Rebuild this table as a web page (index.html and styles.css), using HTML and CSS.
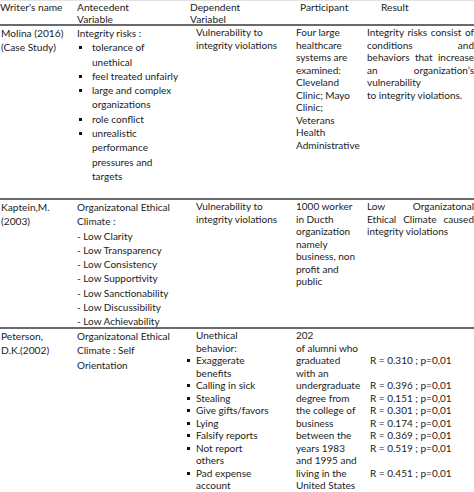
FILE: index.html
```html
<!DOCTYPE html>
<html>
<head>
<meta charset="utf-8">
<link rel="stylesheet" href="styles.css">
</head>
<body>
<div class="table">
  <div class="row head">
    <div class="c c1">Writer's name</div>
    <div class="c c2">Antecedent<br>Variable</div>
    <div class="c c3">Dependent<br>Variabel</div>
    <div class="c c4">Participant</div>
    <div class="c c5">Result</div>
  </div>

  <div class="row r1">
    <div class="c c1">Molina (2016)<br>(Case Study)</div>
    <div class="c c2">
      Integrity risks :
      <ul class="sq">
        <li>tolerance of<br>unethical</li>
        <li>feel treated unfairly</li>
        <li>large and complex<br>organizations</li>
        <li>role conflict</li>
        <li>unrealistic<br>performance<br>pressures and<br>targets</li>
      </ul>
    </div>
    <div class="c c3 s">Vulnerability to<br>integrity violations</div>
    <div class="c c4 s">Four large<br>healthcare<br>systems are<br>examined:<br>Cleveland<br>Clinic; Mayo<br>Clinic;<br>Veterans<br>Health<br>Administrative</div>
    <div class="c c5 s">
      <span class="j">Integrity risks consist of</span>
      <span class="j">conditions and</span>
      <span class="j">behaviors that increase</span>
      <span class="j">an organization’s</span>
      <span class="l">vulnerability</span>
      <span class="l">to integrity violations.</span>
    </div>
  </div>

  <div class="row r2">
    <div class="c c1">Kaptein,M.<br>(2003)</div>
    <div class="c c2">Organizatonal Ethical<br>Climate :<br>- Low Clarity<br>- Low Transparency<br>- Low Consistency<br>- Low Supportivity<br>- Low Sanctionability<br>- Low Discussibility<br>- Low Achievability</div>
    <div class="c c3 s">Vulnerability to<br>integrity violations</div>
    <div class="c c4 s">1000 worker<br>in Ducth<br>organization<br>namely<br>business, non<br>profit and<br>public</div>
    <div class="c c5 s">
      <span class="j">Low Organizatonal</span>
      <span class="j">Ethical Climate caused</span>
      <span class="l">integrity violations</span>
    </div>
  </div>

  <div class="row r3">
    <div class="c c1">Peterson,<br>D.K.(2002)</div>
    <div class="c c2">Organizatonal Ethical<br>Climate : Self<br>Orientation</div>
    <div class="c c3 s u">
      Unethical<br>behavior:
      <ul class="sq2">
        <li>Exaggerate<br>benefits</li>
        <li>Calling in sick</li>
        <li>Stealing</li>
        <li>Give gifts/favors</li>
        <li>Lying</li>
        <li>Falsify reports</li>
        <li>Not report<br>others</li>
        <li>Pad expense<br>account</li>
      </ul>
    </div>
    <div class="c c4 s">202<br>of alumni who<br>graduated<br>with an<br>undergraduate<br>degree from<br>the college of<br>business<br>between the<br>years 1983<br>and 1995 and<br>living in the<br>United States</div>
    <div class="c c5 s rv">
      <span class="l">&nbsp;</span>
      <span class="l">&nbsp;</span>
      <span class="l">R = 0.310 ; p=0,01</span>
      <span class="l">&nbsp;</span>
      <span class="l">R = 0.396 ; p=0,01</span>
      <span class="l">R = 0.151 ; p=0,01</span>
      <span class="l">R = 0.301 ; p=0,01</span>
      <span class="l">R = 0.174 ; p=0,01</span>
      <span class="l">R = 0.369 ; p=0,01</span>
      <span class="l">R = 0.519 ; p=0,01</span>
      <span class="l">&nbsp;</span>
      <span class="l">R = 0.451 ; p=0,01</span>
    </div>
  </div>
</div>
</body>
</html>
```

FILE: styles.css
```css
html, body {
  margin: 0;
  padding: 0;
  background: #fff;
}
body {
  width: 474px;
  height: 492px;
  overflow: hidden;
  font-family: "Lato", "Noto Sans", sans-serif;
  font-size: 10.2px;
  color: #222;
}
.table {
  border-top: 1px solid #e2e2e2;
  width: 474px;
}
.row {
  display: grid;
  grid-template-columns: 77px 113px 106px 71px 107px;
}
.c {
  line-height: 14.3px;
  white-space: nowrap;
}
.c2 { font-size: 10px; }
.c.s {
  line-height: 12.5px;
  font-size: 10px;
}
.head {
  height: 23px;
}
.head .c {
  line-height: 12px;
  font-size: 10.2px;
}
.head .c3 { padding-left: 0; }
.head .c4 { padding-left: 4px; }
.head .c5 { padding-left: 14px; }
.r1, .r2, .r3 {
  border-top: 2px solid #6a6a6a;
}
.r1 { height: 172px; }
.r2 { height: 127px; }
.r3 { height: 170px; }
.c1 { padding-left: 0; }
.row:not(.head) .c1 { padding-left: 1px; }
.row:not(.head) .c3 { padding-left: 6px; }
.c3.u { padding-left: 16px; }
.c5 span { display: block; }
.c5 .j {
  text-align: justify;
  text-align-last: justify;
  width: 107px;
}
.c5.rv { padding-left: 3px; }
ul {
  list-style: none;
  margin: 0;
  padding: 0;
}
.sq { padding-left: 15px; }
.sq li, .sq2 li { position: relative; }
.sq li::before {
  content: "";
  position: absolute;
  left: -13px;
  top: 6px;
  width: 3px;
  height: 3px;
  background: #111;
}
.sq2 li::before {
  content: "";
  position: absolute;
  left: -9px;
  top: 5px;
  width: 3px;
  height: 3px;
  background: #111;
}
```
